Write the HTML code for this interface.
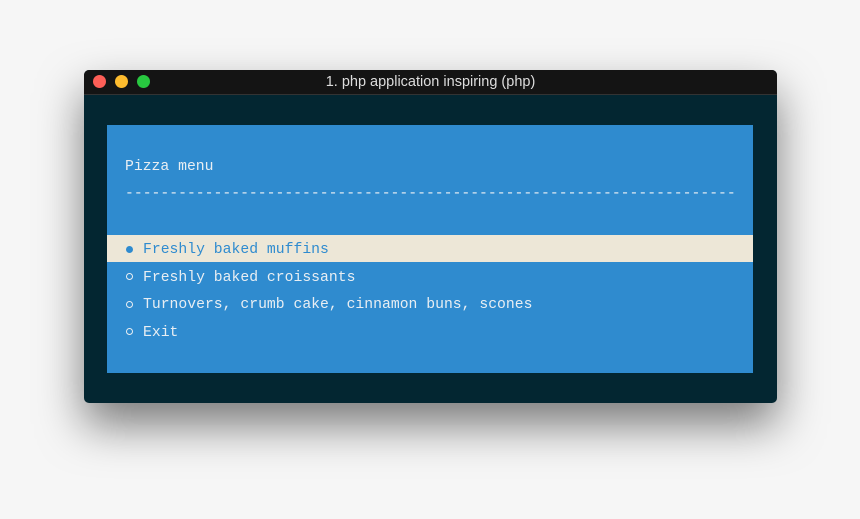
<!DOCTYPE html>
<html><head><style>
body{margin:0;width:860px;height:519px;background:#f6f6f6;position:relative;overflow:hidden;font-family:"Liberation Mono",monospace}
.win{position:absolute;left:84px;top:70px;width:693px;height:333px;background:#032631;border-radius:5px;box-shadow:0 22px 45px rgba(0,0,0,.5);overflow:hidden}
.tb{height:24px;background:#141414;border-bottom:1px solid #333;position:relative}
.tb span{position:absolute;top:5px;width:13px;height:13px;border-radius:50%}
.tt{position:absolute;left:0;right:0;top:4px;text-align:center;color:#ddd;font:14.5px "Liberation Sans",sans-serif}
.p{position:absolute;left:23px;top:55px;width:646px;height:248px;background:#2f8bcf;color:#e8eef3;font-size:14.75px}
.l{position:absolute;left:36px;white-space:pre}
.b{position:absolute;left:19px;width:5px;height:5px;border:1.5px solid #e8eef3;border-radius:50%}
.hl{position:absolute;left:0;top:110px;width:646px;height:27px;background:#ede7d7}
</style></head><body>
<div class="win">
<div class="tb"><span style="left:9px;background:#fe5f57"></span><span style="left:31px;background:#febc2e"></span><span style="left:53px;background:#28c840"></span><div class="tt">1. php application inspiring (php)</div></div>
<div class="p">
<div class="l" style="top:34px;left:18px">Pizza menu</div>
<div class="l" style="top:61px;left:18px">---------------------------------------------------------------------</div>
<div class="hl"></div>
<div class="b" style="top:121px;background:#2f8bcf;border-color:#2f8bcf"></div>
<div class="l" style="top:117px;color:#2f8bcf">Freshly baked muffins</div>
<div class="b" style="top:148px"></div>
<div class="l" style="top:145px">Freshly baked croissants</div>
<div class="b" style="top:176px"></div>
<div class="l" style="top:172px">Turnovers, crumb cake, cinnamon buns, scones</div>
<div class="b" style="top:203px"></div>
<div class="l" style="top:200px">Exit</div>
</div>
</div>
</body></html>
